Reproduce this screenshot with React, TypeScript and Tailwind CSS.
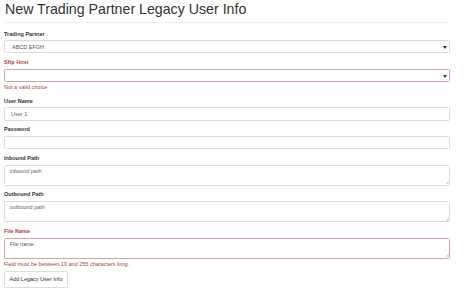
import React from "react";

const font = { fontFamily: '"Liberation Sans", Arial, sans-serif' };

function Label({ children, error }: { children: React.ReactNode; error?: boolean }) {
  return (
    <div
      className={`text-[5.5px] leading-[7.8px] font-bold mb-[1.9px] ${error ? "text-[#a94442]" : "text-[#333]"}`}
    >
      {children}
    </div>
  );
}

function Caret() {
  return (
    <svg width="4" height="3" viewBox="0 0 4 3" className="absolute right-[2px] top-[5px]">
      <path d="M0 0 L4 0 L2 3 Z" fill="#333" />
    </svg>
  );
}

function Grip() {
  return (
    <svg width="3" height="3" viewBox="0 0 3 3" className="absolute right-[0.5px] bottom-[0.5px]">
      <path d="M3 0 L0 3 M3 1.5 L1.5 3" stroke="#999" strokeWidth="0.5" />
    </svg>
  );
}

export default function App() {
  return (
    <div className="w-[474px] h-[293px] bg-white overflow-hidden" style={font}>
      <div className="pl-[4px] w-[450px]">
        <h1 className="text-[14.2px] leading-[15px] text-[#333] font-normal mt-[1.5px] pl-[1px]">
          New Trading Partner Legacy User Info
        </h1>
        <div className="mt-[5.5px] h-px bg-[#eeeeee] w-[444px]" />
        <div className="mt-[7.6px]">
          <div className="mb-[5.8px]">
            <Label>Trading Partner</Label>
            <div className="relative h-[13.2px] border border-[#dddddd] rounded-[1.5px] bg-white shadow-[inset_0_0.5px_0.5px_rgba(0,0,0,0.06)]">
              <span className="absolute left-[7px] top-[2.4px] text-[5.5px] leading-[7.8px] text-[#555]">ABCD EFGH</span>
              <Caret />
            </div>
          </div>
          <div className="mb-[5.8px]">
            <Label error>Sftp Host</Label>
            <div className="relative h-[13.2px] border border-[#cfa3a3] rounded-[1.5px] bg-white">
              <Caret />
            </div>
            <div className="mt-[1.9px] text-[5.5px] leading-[7.8px] text-[#a94442]">Not a valid choice</div>
          </div>
          <div className="mb-[5.8px]">
            <Label>User Name</Label>
            <div className="h-[13.2px] border border-[#dddddd] rounded-[1.5px] bg-white pl-[6px] pt-[2.2px] text-[5.5px] leading-[7.8px] text-[#666]">
              User 1
            </div>
          </div>
          <div className="mb-[5.8px]">
            <Label>Password</Label>
            <div className="h-[13.2px] border border-[#dddddd] rounded-[1.5px] bg-white" />
          </div>
          <div className="mb-[5.8px]">
            <Label>Inbound Path</Label>
            <div className="relative h-[21px] border border-[#dddddd] rounded-[1.5px] bg-white pl-[4.7px] pt-[2.2px] text-[5.5px] leading-[7.8px] text-[#666]">
              inbound path
              <Grip />
            </div>
          </div>
          <div className="mb-[5.8px]">
            <Label>Outbound Path</Label>
            <div className="relative h-[21px] border border-[#dddddd] rounded-[1.5px] bg-white pl-[4.7px] pt-[2.2px] text-[5.5px] leading-[7.8px] text-[#666]">
              outbound path
              <Grip />
            </div>
          </div>
          <div>
            <Label error>File Name</Label>
            <div className="relative h-[21px] border border-[#cfa3a3] rounded-[1.5px] bg-white pl-[4.7px] pt-[2.2px] text-[5.5px] leading-[7.8px] text-[#555]">
              File name
              <Grip />
            </div>
            <div className="mt-[1.9px] text-[5.5px] leading-[7.8px] text-[#a94442]">
              Field must be between 10 and 255 characters long.
            </div>
          </div>
          <div className="mt-[3px] flex">
            <button className="flex items-center justify-center h-[17px] w-[64px] border border-[#dddddd] rounded-[1.5px] bg-white text-[5.5px] leading-[7.8px] text-[#333]">
              Add Legacy User Info
            </button>
          </div>
        </div>
      </div>
    </div>
  );
}
